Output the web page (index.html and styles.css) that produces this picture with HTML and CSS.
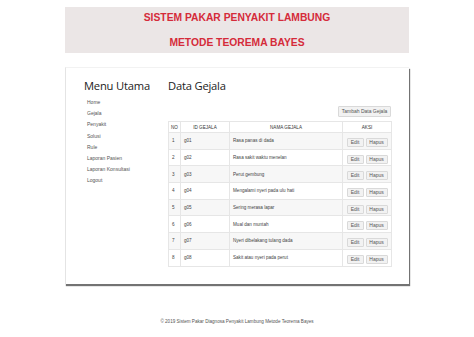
FILE: index.html
```html
<!DOCTYPE html>
<html lang="id">
<head>
  <meta charset="UTF-8" />
  <title>Data Gejala</title>
  <link rel="stylesheet" href="styles.css">
</head>
<body>
  <div class="header">
    <h1>SISTEM PAKAR PENYAKIT LAMBUNG</h1>
    <h1>METODE TEOREMA BAYES</h1>
  </div>

  <div class="card">
    <div class="sidebar">
      <h2>Menu Utama</h2>
      <ul class="menu">
        <li><a href="#">Home</a></li>
        <li><a href="#">Gejala</a></li>
        <li><a href="#">Penyakit</a></li>
        <li><a href="#">Solusi</a></li>
        <li><a href="#">Rule</a></li>
        <li><a href="#">Laporan Pasien</a></li>
        <li><a href="#">Laporan Konsultasi</a></li>
        <li><a href="#">Logout</a></li>
      </ul>
    </div>

    <div class="content">
      <h2>Data Gejala</h2>
      <div class="toolbar">
        <button class="btn">Tambah Data Gejala</button>
      </div>
      <table class="tabel">
        <thead>
          <tr>
            <th class="col-no">NO</th>
            <th class="col-id">ID GEJALA</th>
            <th class="col-nama">NAMA GEJALA</th>
            <th class="col-aksi">AKSI</th>
          </tr>
        </thead>
        <tbody>
          <tr><td>1</td><td>g01</td><td>Rasa panas di dada</td><td class="aksi"><button class="btn">Edit</button><button class="btn">Hapus</button></td></tr>
          <tr><td>2</td><td>g02</td><td>Rasa sakit waktu menelan</td><td class="aksi"><button class="btn">Edit</button><button class="btn">Hapus</button></td></tr>
          <tr><td>3</td><td>g03</td><td>Perut gembung</td><td class="aksi"><button class="btn">Edit</button><button class="btn">Hapus</button></td></tr>
          <tr><td>4</td><td>g04</td><td>Mengalami nyeri pada ulu hati</td><td class="aksi"><button class="btn">Edit</button><button class="btn">Hapus</button></td></tr>
          <tr><td>5</td><td>g05</td><td>Sering merasa lapar</td><td class="aksi"><button class="btn">Edit</button><button class="btn">Hapus</button></td></tr>
          <tr><td>6</td><td>g06</td><td>Mual dan muntah</td><td class="aksi"><button class="btn">Edit</button><button class="btn">Hapus</button></td></tr>
          <tr><td>7</td><td>g07</td><td>Nyeri dibelakang tulang dada</td><td class="aksi"><button class="btn">Edit</button><button class="btn">Hapus</button></td></tr>
          <tr><td>8</td><td>g08</td><td>Sakit atau nyeri pada perut</td><td class="aksi"><button class="btn">Edit</button><button class="btn">Hapus</button></td></tr>
        </tbody>
      </table>
    </div>
  </div>

  <p class="footer">&copy; 2019 Sistem Pakar Diagnosa Penyakit Lambung Metode Teorema Bayes</p>
</body>
</html>
```

FILE: styles.css
```css
body {
  font-family: 'Liberation Sans', Arial, sans-serif;
  background-color: #ffffff;
  margin: 0;
  padding: 7px 0 0;
  color: #333333;
}

.header {
  width: 344px;
  margin: 0 0 0 65px;
  background-color: #ebe6e6;
  padding: 5px 0 4px;
  text-align: center;
}

.header h1 {
  margin: 0;
  font-size: 10.3px;
  line-height: 12px;
  color: #d52b3a;
  font-weight: bold;
}

.header h1 + h1 {
  margin-top: 13px;
}

.card {
  display: flex;
  width: 344px;
  margin: 14px 0 0 65px;
  padding: 9px 18px 17px;
  box-sizing: border-box;
  background: #ffffff;
  border-left: 1px solid #e4e4e4;
  border-top: 1px solid #f2f2f2;
  box-shadow: 1px 2px 1px rgba(0, 0, 0, 0.55);
}

h2 {
  margin: 0;
  font-family: 'Open Sans', sans-serif;
  font-weight: normal;
  font-size: 11.2px;
  line-height: 18px;
  letter-spacing: -0.2px;
  color: #222222;
}

.sidebar {
  width: 84px;
  flex: none;
}

.menu {
  list-style: none;
  margin: 2px 0 0 3px;
  padding: 0;
}

.menu li {
  height: 11.2px;
  line-height: 11px;
  font-size: 5px;
}

.menu a {
  color: #555555;
  text-decoration: none;
}

.content {
  flex: 1;
  min-width: 0;
}

.toolbar {
  display: flex;
  justify-content: flex-end;
  margin: 11px 0 4px;
}

.btn {
  font-family: 'Liberation Sans', Arial, sans-serif;
  font-size: 5px;
  line-height: 7px;
  padding: 2px 3px;
  background: #f2f2f2;
  border: 1px solid #d9d9d9;
  border-radius: 1px;
  color: #555555;
  cursor: pointer;
}

.toolbar .btn {
  width: 53px;
  height: 11px;
  padding: 0;
}

.tabel {
  width: 224px;
  border-collapse: collapse;
  table-layout: fixed;
  font-size: 4.6px;
  color: #444444;
}

.tabel th,
.tabel td {
  border: 1px solid #e6e6e6;
  padding: 0;
  text-align: left;
}

.tabel th {
  height: 10px;
  text-align: center;
  font-weight: normal;
  color: #333333;
}

.tabel td {
  height: 15.7px;
  padding-left: 3px;
  vertical-align: middle;
}

.tabel tbody tr:nth-child(odd) {
  background-color: #f7f7f7;
}

.col-no { width: 11px; }
.col-id { width: 48px; }
.col-nama { width: 112px; }
.col-aksi { width: 48px; }

.tabel td.aksi {
  text-align: center;
  padding: 0;
}

.aksi .btn {
  height: 9px;
  padding: 0;
  margin: 3px 1px 0;
  line-height: 7px;
}

.aksi .btn:first-child {
  width: 17px;
}

.aksi .btn + .btn {
  width: 22px;
}

.footer {
  margin: 35px 0 0;
  text-align: center;
  font-size: 4.6px;
  color: #555555;
}
```
